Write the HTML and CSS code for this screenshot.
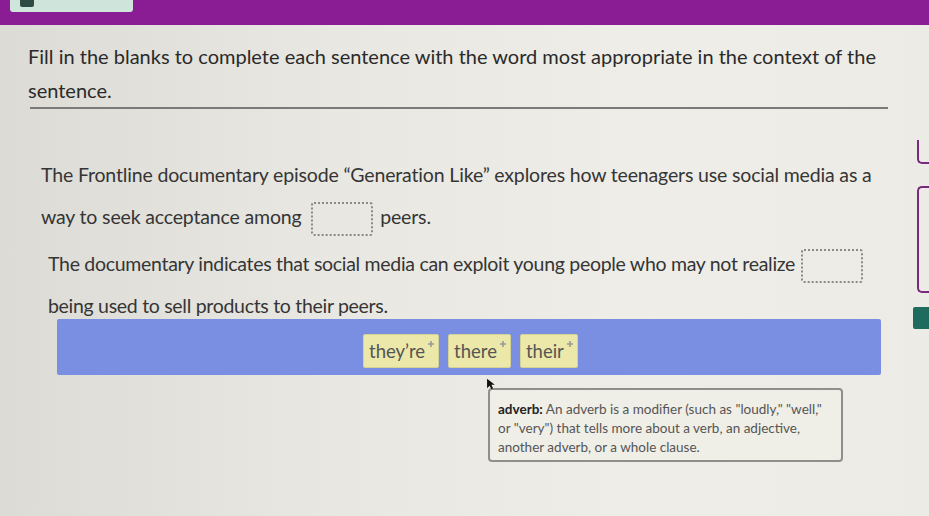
FILE: index.html
```html
<!DOCTYPE html>
<html>
<head>
<meta charset="utf-8">
<link rel="stylesheet" href="styles.css">
</head>
<body>
<div class="topbar">
  <div class="tab"><span class="tab-icon"></span></div>
</div>
<div class="page">
  <div class="content">
    <h1 class="prompt">Fill in the blanks to complete each sentence with the word most appropriate in the context of the<br>sentence.</h1>
    <div class="rule"></div>
    <p class="sentence s1">The Frontline documentary episode “Generation Like” explores how teenagers use social media as a<br>way to seek acceptance among <span class="blank"></span> peers.</p>
    <p class="sentence s2">The documentary indicates that social media can exploit young people who may not realize <span class="blank"></span><br>being used to sell products to their peers.</p>
    <div class="bank">
      <span class="chip">they’re<svg class="plus" viewBox="0 0 8 8"><path d="M4 1v6M1 4h6"/></svg></span>
      <span class="chip">there<svg class="plus" viewBox="0 0 8 8"><path d="M4 1v6M1 4h6"/></svg></span>
      <span class="chip">their<svg class="plus" viewBox="0 0 8 8"><path d="M4 1v6M1 4h6"/></svg></span>
    </div>
    <div class="tip-area">
      <svg class="cursor" viewBox="0 0 10 14"><path d="M1 1l0 11 3-3 2 4 2-1-2-4 4 0z"/></svg>
      <div class="tooltip"><b>adverb:</b> An adverb is a modifier (such as "loudly," "well,"<br>or "very") that tells more about a verb, an adjective,<br>another adverb, or a whole clause.</div>
    </div>
  </div>
  <div class="side">
    <div class="side-box1"></div>
    <div class="side-box2"></div>
    <div class="side-green"></div>
  </div>
</div>
</body>
</html>
```
FILE: styles.css
```css
html, body {
  margin: 0;
  padding: 0;
}
body {
  width: 929px;
  height: 516px;
  overflow: hidden;
  background: linear-gradient(90deg, #dcdbd5 0%, #e8e7e2 35%, #eeede8 70%, #ecebe6 100%);
  font-family: Lato, "Open Sans", sans-serif;
  color: #333;
}
.topbar {
  height: 25px;
  background: #8a1d94;
  display: flex;
  align-items: flex-start;
}
.tab {
  margin-left: 10px;
  width: 123px;
  height: 12px;
  background: #cfe5dc;
  border-radius: 0 0 3px 3px;
  display: flex;
  align-items: flex-start;
}
.tab-icon {
  margin-left: 10px;
  width: 14px;
  height: 7px;
  background: #2f4a44;
  border-radius: 0 0 2px 2px;
}
.page {
  display: flex;
}
.content {
  width: 917px;
  position: relative;
}
.prompt {
  margin: 14px 0 0 28px;
  font-size: 20px;
  font-weight: 400;
  line-height: 34px;
  color: #2a2a2a;
}
.rule {
  margin: 0 0 0 30px;
  width: 858px;
  height: 2px;
  background: #7a7a7a;
}
.sentence {
  margin: 0;
  font-size: 19.5px;
  line-height: 42px;
  color: #353535;
  letter-spacing: -0.16px;
}
.s1 {
  margin-top: 45px;
  padding-left: 41px;
}
.s2 {
  margin-top: 5px;
  padding-left: 48px;
  letter-spacing: -0.3px;
}
.blank {
  display: inline-block;
  width: 58px;
  height: 30px;
  vertical-align: middle;
  border: 2px dotted #8a8a8a;
  border-radius: 3px;
  margin: 0 2px 0 5px;
}
.s2 .blank {
  margin-left: 1px;
}
.bank {
  margin: -8px 0 0 57px;
  width: 824px;
  height: 56px;
  background: #7b8fe2;
  border-radius: 2px;
  display: flex;
  justify-content: flex-start;
  align-items: center;
  gap: 9px;
  padding-left: 306px;
  box-sizing: border-box;
}
.chip {
  height: 32px;
  display: inline-flex;
  align-items: center;
  padding: 0 3px 0 5px;
  background: #ebe8a9;
  border: 1px solid #d6d293;
  border-radius: 2px;
  font-size: 18.5px;
  color: #555;
  margin-top: 8px;
}
.plus {
  width: 8px;
  height: 8px;
  align-self: flex-start;
  margin-top: 5px;
  margin-left: 2px;
  stroke: #999;
  stroke-width: 1.6;
}
.tip-area {
  position: relative;
  padding: 13px 0 0 488px;
}
.cursor {
  position: absolute;
  left: 486px;
  top: 3px;
  width: 9px;
  height: 12px;
  fill: #111;
}
.tooltip {
  width: 343px;
  padding: 10px 0 3px 8px;
  background: #efeee7;
  border: 2px solid #8e8e8a;
  border-radius: 4px;
  font-size: 13.5px;
  line-height: 19px;
  color: #555;
}
.tooltip b {
  color: #222;
  font-weight: 700;
}
.side {
  width: 12px;
  display: flex;
  flex-direction: column;
}
.side-box1 {
  margin-top: 115px;
  height: 22px;
  border: 2px solid #7a2a7e;
  border-right: none;
  border-top: none;
  border-radius: 0 0 0 5px;
}
.side-box2 {
  margin-top: 22px;
  height: 103px;
  border: 2px solid #7a2a7e;
  border-right: none;
  border-radius: 5px 0 0 5px;
}
.side-green {
  margin-top: 14px;
  margin-left: -4px;
  width: 16px;
  height: 22px;
  background: #1f6b5e;
  border-radius: 2px 0 0 2px;
}
```
